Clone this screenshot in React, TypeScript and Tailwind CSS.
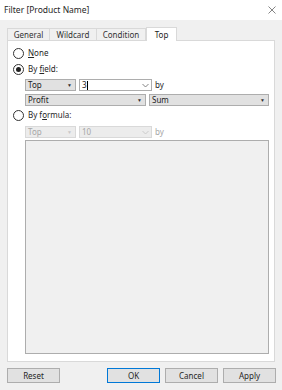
import React from "react";

const font = { fontFamily: '"Noto Sans", "Liberation Sans", sans-serif' };

function Radio({ checked }: { checked?: boolean }) {
  return (
    <div className="w-[11px] h-[11px] rounded-full border border-[#333] bg-white flex items-center justify-center shrink-0">
      {checked && <div className="w-[5px] h-[5px] rounded-full bg-[#222]" />}
    </div>
  );
}

function Select({ label, w, disabled }: { label: string; w: string; disabled?: boolean }) {
  return (
    <div
      className={`${w} h-[12px] border flex items-center justify-between pl-[2px] pr-[3px] ${
        disabled ? "border-[#d9d9d9] bg-[#ececec] text-[#a6a6a6]" : "border-[#adadad] bg-[#e1e1e1] text-[#222]"
      }`}
    >
      <span>{label}</span>
      <span className={`text-[5px] ${disabled ? "text-[#c8c8c8]" : "text-[#333]"}`}>▼</span>
    </div>
  );
}

function Combo({ value, disabled, cursor }: { value: string; disabled?: boolean; cursor?: boolean }) {
  return (
    <div
      className={`w-[73px] h-[12px] border flex items-center justify-between pl-[2px] pr-[2px] ${
        disabled ? "border-[#d9d9d9] bg-[#ececec] text-[#a6a6a6]" : "border-[#adadad] bg-white text-[#222]"
      }`}
    >
      <span className="flex items-center">
        {value}
        {cursor && <span className="inline-block w-[1px] h-[9px] bg-black" />}
      </span>
      <svg width="7" height="5" viewBox="0 0 7 5">
        <path d="M0.5 1 L3.5 4 L6.5 1" fill="none" stroke={disabled ? "#c8c8c8" : "#777"} strokeWidth="0.9" />
      </svg>
    </div>
  );
}

export default function App() {
  return (
    <div className="w-[282px] h-[390px] bg-[#f0f0f0] text-[8px] leading-none text-[#262626] flex flex-col" style={font}>
      <div className="h-[20px] bg-white flex items-center justify-between pl-[4px] pr-[6px]">
        <span className="text-[8.5px] text-[#262626]">Filter [Product Name]</span>
        <svg width="8" height="8" viewBox="0 0 8 8">
          <path d="M0.5 0.5 L7.5 7.5 M7.5 0.5 L0.5 7.5" stroke="#666" strokeWidth="0.8" />
        </svg>
      </div>
      <div className="pl-[7px] pt-[6px] flex flex-col">
        <div className="flex items-end h-[14px]">
          <div className="w-[43px] h-[12px] border border-b-0 border-[#d9d9d9] bg-[#f0f0f0] flex items-center justify-center text-[#333]">General</div>
          <div className="w-[47px] h-[12px] border border-b-0 border-l-0 border-[#d9d9d9] bg-[#f0f0f0] flex items-center justify-center text-[#333]">Wildcard</div>
          <div className="w-[49px] h-[12px] border border-b-0 border-l-0 border-[#d9d9d9] bg-[#f0f0f0] flex items-center justify-center text-[#333]">Condition</div>
          <div className="w-[31px] h-[14px] border border-b-0 border-[#d9d9d9] bg-white flex items-center justify-center text-[#222] relative top-[1px] z-10">Top</div>
        </div>
        <div className="w-[268px] h-[322px] border border-[#d9d9d9] bg-white flex flex-col pl-[5px]">
          <div className="flex items-center gap-[4px] mt-[6px] h-[12px]">
            <Radio />
            <span><u>N</u>one</span>
          </div>
          <div className="flex items-center gap-[4px] mt-[4px] h-[12px]">
            <Radio checked />
            <span>By <u>f</u>ield:</span>
          </div>
          <div className="flex items-center mt-[4px] pl-[12px] gap-[3px]">
            <Select label="Top" w="w-[51px]" />
            <Combo value="3" cursor />
            <span>by</span>
          </div>
          <div className="flex items-center mt-[3px] pl-[12px] gap-[3px]">
            <Select label="Profit" w="w-[121px]" />
            <Select label="Sum" w="w-[120px]" />
          </div>
          <div className="flex items-center gap-[4px] mt-[3px] h-[12px]">
            <Radio />
            <span>By f<u>o</u>rmula:</span>
          </div>
          <div className="flex items-center mt-[5px] pl-[12px] gap-[3px] text-[#a6a6a6]">
            <Select label="Top" w="w-[51px]" disabled />
            <Combo value="10" disabled />
            <span>by</span>
          </div>
          <div className="ml-[12px] mt-[2px] w-[244px] h-[214px] border border-[#adadad] bg-[#f0f0f0]" />
        </div>
      </div>
      <div className="flex items-center mt-[6px] pl-[7px] h-[15px]">
        <div className="w-[53px] h-[15px] border border-[#adadad] bg-[#e1e1e1] flex items-center justify-center">Reset</div>
        <div className="w-[53px] h-[15px] border border-[#0078d7] bg-[#e1e1e1] flex items-center justify-center ml-[47px]">OK</div>
        <div className="w-[53px] h-[15px] border border-[#adadad] bg-[#e1e1e1] flex items-center justify-center ml-[5px]">Cancel</div>
        <div className="w-[53px] h-[15px] border border-[#adadad] bg-[#e1e1e1] flex items-center justify-center ml-[5px]">Apply</div>
      </div>
    </div>
  );
}
